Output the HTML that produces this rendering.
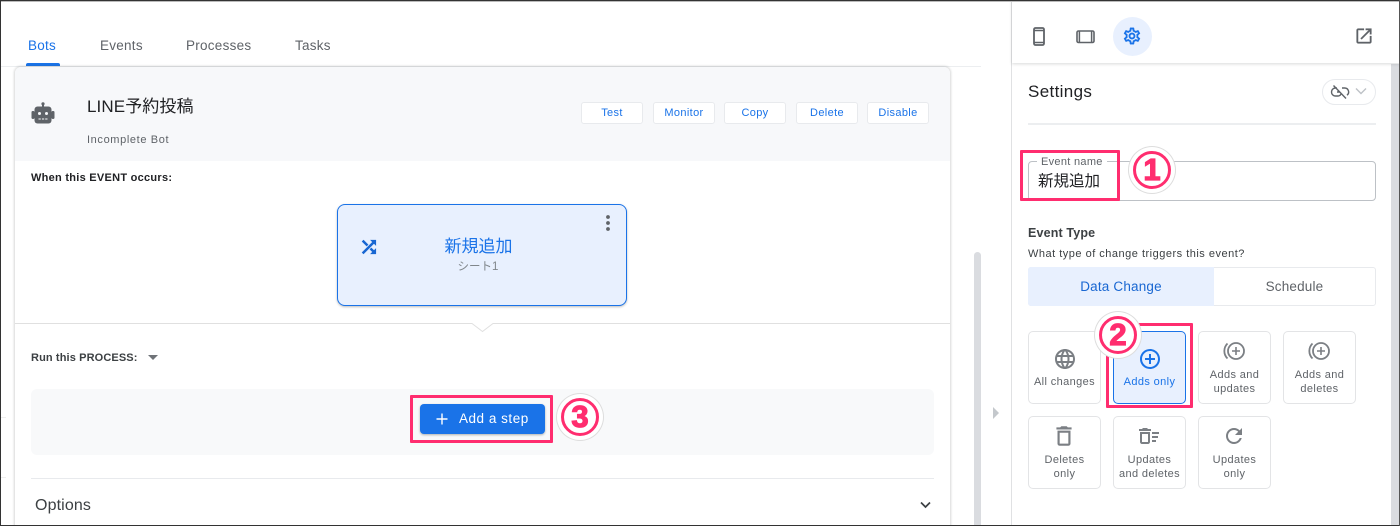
<!DOCTYPE html>
<html style="overflow:hidden;height:526px"><head><meta charset="utf-8"><style>
html,body{margin:0;padding:0}
body{width:1400px;height:526px;overflow:hidden;background:#fff;font-family:"Liberation Sans","Noto Sans CJK JP",sans-serif;color:#202124}
#w{position:absolute;left:0;top:0;width:1400px;height:526px;overflow:hidden}
.a{position:absolute;white-space:nowrap}
.c{text-align:center}
svg{position:absolute;display:block}
.tab{top:38px;font-size:13.5px;line-height:16px;letter-spacing:.26px;color:#5f6368}
.btn{top:102px;width:60px;height:20px;border:1px solid #e8eaed;border-radius:3px;background:#fff;color:#1a73e8;font-size:11px;line-height:21px;text-align:center;letter-spacing:.35px}
.tile{width:71px;height:71px;border:1px solid #e3e4e6;border-radius:5px;background:#fff}
.tl{font-size:11px;line-height:14px;color:#5f6368;text-align:center;letter-spacing:.38px;white-space:nowrap}
.pink{border:3px solid #ff2d6f;box-sizing:border-box;border-radius:1px}
.num{width:32px;height:32px;border-radius:50%;border:3px solid #ff2d6f;background:#fff;box-shadow:0 0 0 4px #fff,0 0 0 5px #ddd;text-align:center;color:#ff2d6f;font-weight:bold;font-size:31px;line-height:32px;-webkit-text-stroke:1.2px #ff2d6f}
</style></head><body><div id="w">

<div class="a tab" style="left:28px;color:#1a73e8">Bots</div>
<div class="a tab" style="left:100px">Events</div>
<div class="a tab" style="left:186px">Processes</div>
<div class="a tab" style="left:295px">Tasks</div>
<div class="a" style="left:26px;top:63px;width:34px;height:3px;background:#1a73e8;border-radius:2px 2px 0 0"></div>
<div class="a" style="left:1px;top:66px;width:980px;height:1px;background:#eceef0"></div>

<div class="a" style="left:0;top:417px;width:6px;height:1px;background:#eee"></div>
<div class="a" style="left:0;top:477px;width:6px;height:1px;background:#eee"></div>

<!-- main card -->
<div class="a" style="left:15px;top:67px;width:935px;height:470px;background:#fff;border-radius:6px;box-shadow:0 0 2px 1px rgba(60,64,67,.2)"></div>
<div class="a" style="left:15px;top:67px;width:935px;height:94px;background:#f7f8fa;border-radius:6px 6px 0 0"></div>

<svg style="left:30px;top:101px" width="26" height="24" viewBox="0 0 26 24" fill="#5f6368"><rect x="4.500" y="5.500" width="17" height="17" rx="3"/><rect x="12" y="2" width="2" height="4"/><circle cx="13" cy="2.800" r="1.600"/><rect x="1.500" y="10" width="3" height="8" rx="1.200"/><rect x="21.500" y="10" width="3" height="8" rx="1.200"/><circle cx="9.500" cy="12.500" r="1.500" fill="#f7f8fa"/><circle cx="16.500" cy="12.500" r="1.500" fill="#f7f8fa"/><rect x="8.500" y="17.500" width="2.300" height="1" fill="#f7f8fa"/><rect x="11.900" y="17.500" width="2.300" height="1" fill="#f7f8fa"/><rect x="15.200" y="17.500" width="2.300" height="1" fill="#f7f8fa"/></svg>

<div class="a" style="left:87px;top:96px;font-size:17px;line-height:21px;letter-spacing:.1px;color:#202124">LINE予約投稿</div>
<div class="a" style="left:87px;top:133px;font-size:11px;line-height:14px;color:#5f6368;letter-spacing:.63px">Incomplete Bot</div>

<div class="a btn" style="left:581px">Test</div>
<div class="a btn" style="left:653px">Monitor</div>
<div class="a btn" style="left:724px">Copy</div>
<div class="a btn" style="left:796px">Delete</div>
<div class="a btn" style="left:867px">Disable</div>

<div class="a" style="left:31px;top:171px;font-size:11px;line-height:14px;font-weight:bold;letter-spacing:.27px;color:#202124">When this EVENT occurs:</div>

<!-- event card -->
<div class="a" style="left:337px;top:204px;width:288px;height:100px;background:#e8f0fe;border:1px solid #1a73e8;border-radius:8px;box-shadow:0 1px 2px rgba(60,64,67,.35)"></div>
<svg style="left:359px;top:237px" width="20" height="20" viewBox="0 0 24 24" fill="#1967d2"><path d="M10.590 9.170L5.410 4 4 5.410l5.170 5.170 1.420-1.410zM14.500 4l2.040 2.040L4 18.590 5.410 20 17.960 7.460 20 9.500V4h-5.500zm.33 9.410l-1.410 1.410 3.130 3.130L14.500 20H20v-5.500l-2.040 2.040-3.130-3.130z" stroke="#1967d2" stroke-width="1"/></svg>
<div class="a c" style="left:338px;top:236px;width:281px;font-size:17px;line-height:21px;color:#1a73e8">新規追加</div>
<div class="a c" style="left:338px;top:260px;width:280px;font-size:11.5px;line-height:14px;color:#80868b">シート1</div>
<svg style="left:599px;top:212px" width="18" height="22" viewBox="0 0 18 22" fill="#5f6368"><circle cx="9" cy="5" r="1.900"/><circle cx="9" cy="11" r="1.900"/><circle cx="9" cy="17" r="1.900"/></svg>

<!-- divider with notch -->
<svg style="left:15px;top:320px" width="935" height="14" viewBox="0 0 935 14"><path d="M0 3.500H457L467.500 11.500 478 3.500H935" fill="none" stroke="#e0e0e0"/></svg>

<div class="a" style="left:31px;top:351px;font-size:11px;line-height:14px;font-weight:bold;letter-spacing:.12px;color:#3c4043">Run this PROCESS:</div>
<svg style="left:147px;top:354px" width="12" height="7" viewBox="0 0 12 7"><path d="M1 1h10L6 6z" fill="#6f7378"/></svg>

<div class="a" style="left:31px;top:389px;width:903px;height:66px;background:#f8f9fa;border-radius:6px"></div>
<div class="a" style="left:420px;top:404px;width:125px;height:30px;background:#1a73e8;border-radius:4px;box-shadow:0 1px 2px rgba(60,64,67,.4)"></div>
<svg style="left:434px;top:411px" width="16" height="16" viewBox="0 0 16 16"><path d="M8 2.500v11M2.500 8h11" stroke="#fff" stroke-width="1.400"/></svg>
<div class="a" style="left:459px;top:411px;font-size:13.5px;line-height:16px;color:#fff;letter-spacing:.52px">Add a step</div>
<div class="a pink" style="left:410px;top:395px;width:143px;height:48px"></div>
<div class="a num" style="left:561px;top:398px">3</div>

<div class="a" style="left:31px;top:478px;width:903px;height:1px;background:#e8eaed"></div>
<div class="a" style="left:35px;top:496px;font-size:16px;line-height:19px;letter-spacing:.12px;color:#3c4043">Options</div>
<svg style="left:920px;top:501px" width="11" height="8" viewBox="0 0 11 8"><path d="M1 1.500L5.500 6 10 1.500" fill="none" stroke="#3c4043" stroke-width="1.700"/></svg>

<!-- mid scrollbar and arrow -->
<div class="a" style="left:974px;top:252px;width:7px;height:274px;background:#dadce0;border-radius:4px 4px 0 0"></div>
<svg style="left:992px;top:406px" width="8" height="14" viewBox="0 0 8 14"><path d="M1 1l6 6-6 6z" fill="#c4c8cc"/></svg>

<!-- right panel -->
<div class="a" style="left:1011px;top:0;width:1px;height:526px;background:#e0e1e3"></div>
<div class="a" style="left:1012px;top:0;width:388px;height:63px;background:#fff;box-shadow:0 1px 3px rgba(60,64,67,.2);z-index:1"></div>
<div style="position:absolute;left:0;top:0;z-index:2">
<svg style="left:1032px;top:27px" width="14" height="19" viewBox="0 0 14 19" fill="none" stroke="#5f6368" stroke-width="1.800"><rect x="2" y="1" width="10" height="17" rx="1.500"/><path d="M2 3.500h10M2 15.500h10" stroke-width="1.500"/></svg>
<svg style="left:1076px;top:29px" width="19" height="15" viewBox="0 0 19 15" fill="none" stroke="#5f6368" stroke-width="1.600"><rect x="1" y="2" width="17" height="11.500" rx="1.500"/><path d="M3.400 2v11.500M15.600 2v11.500" stroke-width="1.500"/></svg>
<div class="a" style="left:1113px;top:17px;width:39px;height:39px;border-radius:50%;background:#e8f0fe"></div>
<svg style="left:1122px;top:26px" width="20" height="20" viewBox="0 0 24 24" fill="#1a73e8" stroke="#1a73e8" stroke-width=".2"><path d="M19.430 12.980c.04-.32.07-.64.07-.98 0-.34-.03-.66-.07-.98l2.110-1.650c.19-.15.24-.42.12-.64l-2-3.460c-.09-.16-.26-.25-.44-.25-.06 0-.12.01-.17.03l-2.490 1c-.52-.4-1.080-.73-1.690-.98l-.38-2.650C14.460 2.180 14.250 2 14 2h-4c-.25 0-.46.18-.49.42l-.38 2.650c-.61.25-1.170.59-1.690.98l-2.490-1c-.06-.02-.12-.03-.18-.03-.17 0-.34.09-.43.25l-2 3.460c-.13.22-.07.49.12.64l2.110 1.650c-.04.32-.07.65-.07.98 0 .33.03.66.07.98l-2.110 1.650c-.19.15-.24.42-.12.64l2 3.460c.09.16.26.25.44.25.06 0 .12-.01.17-.03l2.490-1c.52.4 1.080.73 1.690.98l.38 2.650c.03.24.24.42.49.42h4c.25 0 .46-.18.49-.42l.38-2.650c.61-.25 1.170-.59 1.690-.98l2.490 1c.06.02.12.03.18.03.17 0 .34-.09.43-.25l2-3.460c.12-.22.07-.49-.12-.64l-2.110-1.650zm-1.980-1.710c.04.31.05.52.05.73 0 .21-.02.43-.05.73l-.14 1.130.89.7 1.080.84-.7 1.210-1.270-.51-1.040-.42-.9.68c-.43.32-.84.56-1.250.73l-1.060.43-.16 1.130-.2 1.350h-1.400l-.19-1.350-.16-1.130-1.060-.43c-.43-.18-.83-.41-1.230-.71l-.91-.7-1.060.43-1.270.51-.7-1.210 1.080-.84.89-.7-.14-1.130c-.03-.31-.05-.54-.05-.74s.02-.43.05-.73l.14-1.130-.89-.7-1.080-.84.7-1.210 1.270.51 1.040.42.9-.68c.43-.32.84-.56 1.250-.73l1.060-.43.16-1.130.2-1.350h1.390l.19 1.350.16 1.130 1.060.43c.43.18.83.41 1.230.71l.91.7 1.060-.43 1.270-.51.7 1.210-1.070.85-.89.7.14 1.130zM12 8c-2.210 0-4 1.790-4 4s1.790 4 4 4 4-1.790 4-4-1.790-4-4-4zm0 6c-1.100 0-2-.9-2-2s.9-2 2-2 2 .9 2 2-.9 2-2 2z"/></svg>
<svg style="left:1354px;top:26px" width="20" height="20" viewBox="0 0 24 24" fill="#5f6368" stroke="#5f6368" stroke-width=".2"><path d="M19 19H5V5h7V3H5c-1.110 0-2 .9-2 2v14c0 1.100.89 2 2 2h14c1.100 0 2-.9 2-2v-7h-2v7zM14 3v2h3.590l-9.830 9.830 1.410 1.410L19 6.410V10h2V3h-7z"/></svg>
</div>

<div class="a" style="left:1391px;top:64px;width:8px;height:462px;background:#dadce0"></div>

<div class="a" style="left:1028px;top:81px;font-size:17px;line-height:21px;letter-spacing:.35px;color:#202124">Settings</div>
<div class="a" style="left:1322px;top:79px;width:52px;height:24px;border:1px solid #e8eaed;border-radius:13px;background:#fff"></div>
<svg style="left:1330px;top:83px" width="20" height="18" viewBox="0 0 20 18" fill="none" stroke="#5f6368" stroke-width="1.400"><path d="M7 5H5.500a4 4 0 0 0 0 8H8a3.500 3.500 0 0 0 3-2M12 5h2.500a4 4 0 0 1 2.500 7.200M7 9h3M3.500 2.500L16 15.500"/></svg>
<svg style="left:1355px;top:87px" width="12" height="9" viewBox="0 0 12 9"><path d="M1 1.500l5 5 5-5" fill="none" stroke="#bdc1c6" stroke-width="1.400"/></svg>
<div class="a" style="left:1028px;top:123px;width:348px;height:2px;background:#eceef0"></div>

<div class="a" style="left:1028px;top:161px;width:346px;height:38px;border:1px solid #bdc1c6;border-radius:4px;background:#fff"></div>
<div class="a" style="left:1037px;top:155px;padding:0 4px;background:#fff;font-size:11px;line-height:14px;letter-spacing:.3px;color:#5f6368">Event name</div>
<div class="a" style="left:1038px;top:172px;font-size:15.5px;line-height:19px;color:#202124">新規追加</div>
<div class="a pink" style="left:1020px;top:150px;width:100px;height:51px"></div>
<div class="a num" style="left:1133px;top:151px">1</div>

<div class="a" style="left:1028px;top:226px;font-size:12.5px;line-height:15px;font-weight:bold;letter-spacing:.15px;color:#3c4043">Event Type</div>
<div class="a" style="left:1028px;top:247px;font-size:11px;line-height:14px;letter-spacing:.5px;color:#3c4043">What type of change triggers this event?</div>

<div class="a" style="left:1028px;top:267px;width:346px;height:37px;border:1px solid #e8eaed;border-radius:3px;background:#fff"></div>
<div class="a c" style="left:1028px;top:267px;width:186px;height:39px;line-height:39px;background:#e8f0fe;color:#1967d2;font-size:13.5px;letter-spacing:.18px;border-radius:3px 0 0 3px">Data Change</div>
<div class="a c" style="left:1214px;top:267px;width:161px;height:39px;line-height:39px;color:#5f6368;font-size:13.5px;letter-spacing:.18px">Schedule</div>

<!-- tiles -->
<div class="a tile" style="left:1028px;top:331px"></div>
<div class="a tile" style="left:1113px;top:331px;background:#e8f0fe;border-color:#1a73e8"></div>
<div class="a tile" style="left:1198px;top:331px"></div>
<div class="a tile" style="left:1283px;top:331px"></div>
<div class="a tile" style="left:1028px;top:416px"></div>
<div class="a tile" style="left:1113px;top:416px"></div>
<div class="a tile" style="left:1198px;top:416px"></div>

<svg style="left:1053px;top:347px" width="24" height="24" viewBox="0 0 24 24" fill="#7b7f84"><path d="M11.990 2C6.470 2 2 6.480 2 12s4.470 10 9.990 10C17.520 22 22 17.520 22 12S17.520 2 11.990 2zm6.930 6h-2.950c-.32-1.250-.78-2.450-1.380-3.560 1.840.63 3.370 1.910 4.330 3.560zM12 4.040c.83 1.200 1.480 2.530 1.910 3.960h-3.820c.43-1.430 1.080-2.760 1.910-3.960zM4.260 14C4.100 13.360 4 12.690 4 12s.1-1.360.26-2h3.380c-.08.66-.14 1.320-.14 2 0 .68.06 1.340.14 2H4.260zm.82 2h2.950c.32 1.250.78 2.450 1.380 3.560-1.840-.63-3.370-1.900-4.330-3.560zm2.950-8H5.080c.96-1.660 2.490-2.930 4.330-3.560C8.810 5.550 8.350 6.750 8.030 8zM12 19.960c-.83-1.200-1.480-2.530-1.910-3.960h3.820c-.43 1.430-1.080 2.760-1.910 3.960zM14.340 14H9.660c-.09-.66-.16-1.320-.16-2 0-.68.07-1.350.16-2h4.680c.09.65.16 1.320.16 2 0 .68-.07 1.340-.16 2zm.25 5.560c.6-1.110 1.060-2.310 1.380-3.560h2.950c-.96 1.650-2.490 2.930-4.330 3.560zM16.360 14c.08-.66.14-1.320.14-2 0-.68-.06-1.340-.14-2h3.380c.16.64.26 1.310.26 2s-.1 1.360-.26 2h-3.380z"/></svg>
<div class="a tl" style="left:1028px;top:375px;width:73px">All changes</div>

<svg style="left:1138px;top:347px" width="24" height="24" viewBox="0 0 24 24" fill="#1a73e8"><path d="M13 7h-2v4H7v2h4v4h2v-4h4v-2h-4V7zm-1-5C6.480 2 2 6.480 2 12s4.480 10 10 10 10-4.480 10-10S17.520 2 12 2zm0 18c-4.410 0-8-3.590-8-8s3.590-8 8-8 8 3.590 8 8-3.590 8-8 8z"/></svg>
<div class="a tl" style="left:1113px;top:375px;width:73px;color:#1a73e8">Adds only</div>

<svg style="left:1221px;top:339px" width="28" height="24" viewBox="0 0 28 24" fill="none" stroke="#7b7f84" stroke-width="1.800"><circle cx="15" cy="12" r="8"/><path d="M15 8v8M11 12h8" stroke-width="1.600"/><path d="M6.500 4.500a10.500 10.500 0 0 0 0 15"/></svg>
<div class="a tl" style="left:1198px;top:368px;width:73px">Adds and<br>updates</div>

<svg style="left:1306px;top:339px" width="28" height="24" viewBox="0 0 28 24" fill="none" stroke="#7b7f84" stroke-width="1.800"><circle cx="15" cy="12" r="8"/><path d="M15 8v8M11 12h8" stroke-width="1.600"/><path d="M6.500 4.500a10.500 10.500 0 0 0 0 15"/></svg>
<div class="a tl" style="left:1283px;top:368px;width:73px">Adds and<br>deletes</div>

<svg style="left:1051px;top:423px" width="26" height="26" viewBox="0 0 24 24" fill="#7b7f84"><path d="M6 19c0 1.100.9 2 2 2h8c1.100 0 2-.9 2-2V7H6v12zM8 9h8v10H8V9zm7.500-5l-1-1h-5l-1 1H5v2h14V4z"/></svg>
<div class="a tl" style="left:1028px;top:453px;width:73px">Deletes<br>only</div>

<svg style="left:1137px;top:424px" width="24" height="24" viewBox="0 0 24 24" fill="#7b7f84"><path d="M15 16h4v2h-4zm0-8h7v2h-7zm0 4h6v2h-6zM3 18c0 1.100.9 2 2 2h6c1.100 0 2-.9 2-2V8H3v10zm2-8h6v8H5v-8zm5-6H6L5 5H2v2h12V5h-3z"/></svg>
<div class="a tl" style="left:1113px;top:453px;width:73px">Updates<br>and deletes</div>

<svg style="left:1222px;top:424px" width="24" height="24" viewBox="0 0 24 24" fill="#7b7f84"><path d="M17.650 6.350C16.200 4.900 14.210 4 12 4c-4.420 0-7.990 3.580-7.990 8s3.570 8 7.990 8c3.730 0 6.840-2.550 7.730-6h-2.080c-.82 2.330-3.040 4-5.650 4-3.310 0-6-2.690-6-6s2.690-6 6-6c1.660 0 3.140.69 4.220 1.780L13 11h7V4l-2.350 2.350z"/></svg>
<div class="a tl" style="left:1198px;top:453px;width:73px">Updates<br>only</div>

<div class="a pink" style="left:1106px;top:323px;width:87px;height:85px"></div>
<div class="a num" style="left:1099px;top:316px">2</div>

<!-- screenshot frame -->
<div class="a" style="left:0;top:0;width:1400px;height:1px;background:#333;z-index:5"></div>
<div class="a" style="left:0;top:1px;width:1400px;height:1px;background:#bbb;z-index:5"></div>
<div class="a" style="left:0;top:0;width:1px;height:526px;background:#333;z-index:5"></div>
<div class="a" style="left:0;top:525px;width:1400px;height:1px;background:#333;z-index:5"></div>
<div class="a" style="left:1399px;top:0;width:1px;height:526px;background:#555;z-index:5"></div>
</div></body></html>
